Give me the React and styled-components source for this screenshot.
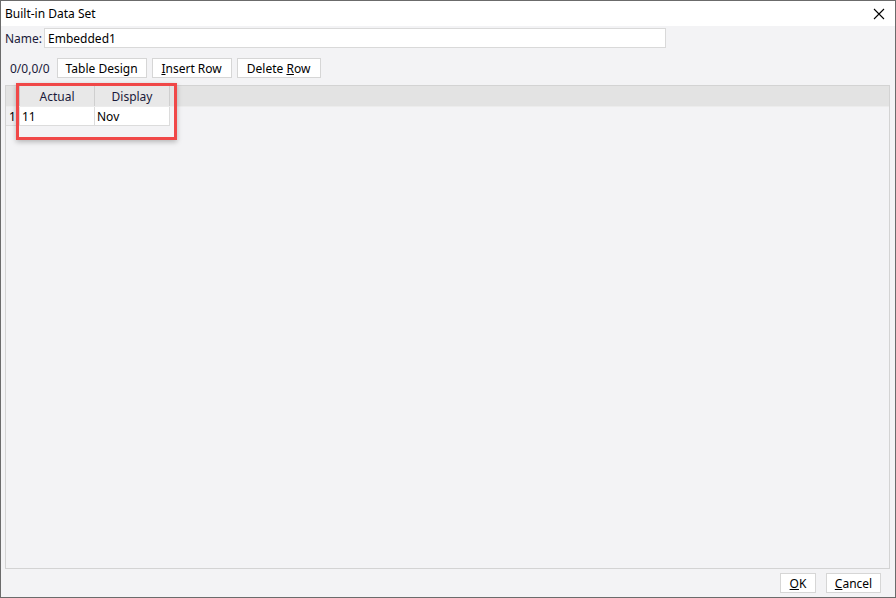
import React from "react";
import styled, { createGlobalStyle } from "styled-components";

const Global = createGlobalStyle`
  html, body { margin: 0; padding: 0; background: #ffffff; }
  body { font-family: "Noto Sans", "Open Sans", "DejaVu Sans", sans-serif; font-size: 12px; color: #141428; }
  * { box-sizing: border-box; }
`;

const Window = styled.div`
  width: 896px;
  height: 598px;
  border: 1px solid #6b6b6b;
  display: flex;
  flex-direction: column;
  background: #f3f3f5;
  position: relative;
`;

const TitleBar = styled.div`
  height: 25px;
  background: #ffffff;
  display: flex;
  align-items: center;
  justify-content: space-between;
  padding: 0 8px 0 4px;
  font-size: 12px;
  color: #000;
`;

const CloseBtn = styled.div`
  width: 16px;
  height: 16px;
  display: flex;
  align-items: center;
  justify-content: center;
`;

const Body = styled.div`
  flex: 1;
  display: flex;
  flex-direction: column;
  padding: 2px 4px 0 4px;
  min-height: 0;
`;

const NameRow = styled.div`
  display: flex;
  align-items: center;
  gap: 2px;
  height: 20px;
`;

const Label = styled.span`
  color: #1a1a3a;
`;

const TextInput = styled.div`
  width: 622px;
  height: 20px;
  background: #fff;
  border: 1px solid #d9d9d9;
  padding: 0 3px;
  display: flex;
  align-items: center;
  color: #000;
`;

const Toolbar = styled.div`
  display: flex;
  align-items: center;
  gap: 5px;
  margin-top: 10px;
  height: 20px;
`;

const Counter = styled.span`
  padding-left: 5px;
  padding-right: 2px;
  color: #1a1a3a;
`;

const Button = styled.div`
  height: 20px;
  width: ${(p) => p.$w}px;
  background: #fff;
  border: 1px solid #d6d6d6;
  display: flex;
  align-items: center;
  justify-content: center;
  color: #000;
  u { text-decoration: underline; text-underline-offset: 1px; }
`;

const Grid = styled.div`
  flex: 1;
  margin-top: 7px;
  margin-right: 1px;
  border: 1px solid #d3d3d3;
  display: flex;
  flex-direction: column;
  position: relative;
`;

const HeaderRow = styled.div`
  display: flex;
  height: 21px;
  background: #e3e3e3;
  border-bottom: 1px solid #ececec;
`;

const RowHead = styled.div`
  width: 14px;
  border-right: 1px solid ${(p) => (p.$header ? "#c8c8c8" : "#dcdcdc")};
  display: flex;
  align-items: center;
  justify-content: center;
  color: #000;
  background: ${(p) => (p.$header ? "transparent" : "#f0f0f2")};
  border-bottom: ${(p) => (p.$header ? "none" : "1px solid #dcdcdc")};
`;

const ColHead = styled.div`
  width: 75px;
  border-right: 1px solid #cfcfcf;
  display: flex;
  align-items: center;
  justify-content: center;
  color: #1a1a3a;
  background: #e8e8e8;
`;

const DataRow = styled.div`
  display: flex;
  height: 19px;
`;

const Cell = styled.div`
  width: 75px;
  background: #fff;
  border-right: 1px solid #dcdcdc;
  border-bottom: 1px solid #dcdcdc;
  display: flex;
  align-items: center;
  padding-left: 2px;
  color: #000;
`;

const Highlight = styled.div`
  position: absolute;
  left: 10px;
  top: -3px;
  width: 161px;
  height: 57px;
  border: 3px solid #f04848;
  box-shadow: 0 2px 5px rgba(0, 0, 0, 0.25);
  pointer-events: none;
`;

const Footer = styled.div`
  height: 28px;
  display: flex;
  justify-content: flex-end;
  align-items: flex-start;
  gap: 10px;
  padding: 4px 14px 0 0;
`;

export default function App() {
  return (
    <>
      <Global />
      <Window>
        <TitleBar>
          <span>Built-in Data Set</span>
          <CloseBtn>
            <svg width="12" height="12" viewBox="0 0 12 12">
              <path d="M1 1L11 11M11 1L1 11" stroke="#000" strokeWidth="1.1" />
            </svg>
          </CloseBtn>
        </TitleBar>
        <Body>
          <NameRow>
            <Label>Name:</Label>
            <TextInput>Embedded1</TextInput>
          </NameRow>
          <Toolbar>
            <Counter>0/0,0/0</Counter>
            <Button $w={90}>Table Design</Button>
            <Button $w={80}><span><u>I</u>nsert Row</span></Button>
            <Button $w={84}><span>Delete <u>R</u>ow</span></Button>
          </Toolbar>
          <Grid>
            <HeaderRow>
              <RowHead $header />
              <ColHead>Actual</ColHead>
              <ColHead>Display</ColHead>
            </HeaderRow>
            <DataRow>
              <RowHead>1</RowHead>
              <Cell>11</Cell>
              <Cell>Nov</Cell>
            </DataRow>
            <Highlight />
          </Grid>
        </Body>
        <Footer>
          <Button $w={36}><span><u>O</u>K</span></Button>
          <Button $w={55}><span><u>C</u>ancel</span></Button>
        </Footer>
      </Window>
    </>
  );
}
